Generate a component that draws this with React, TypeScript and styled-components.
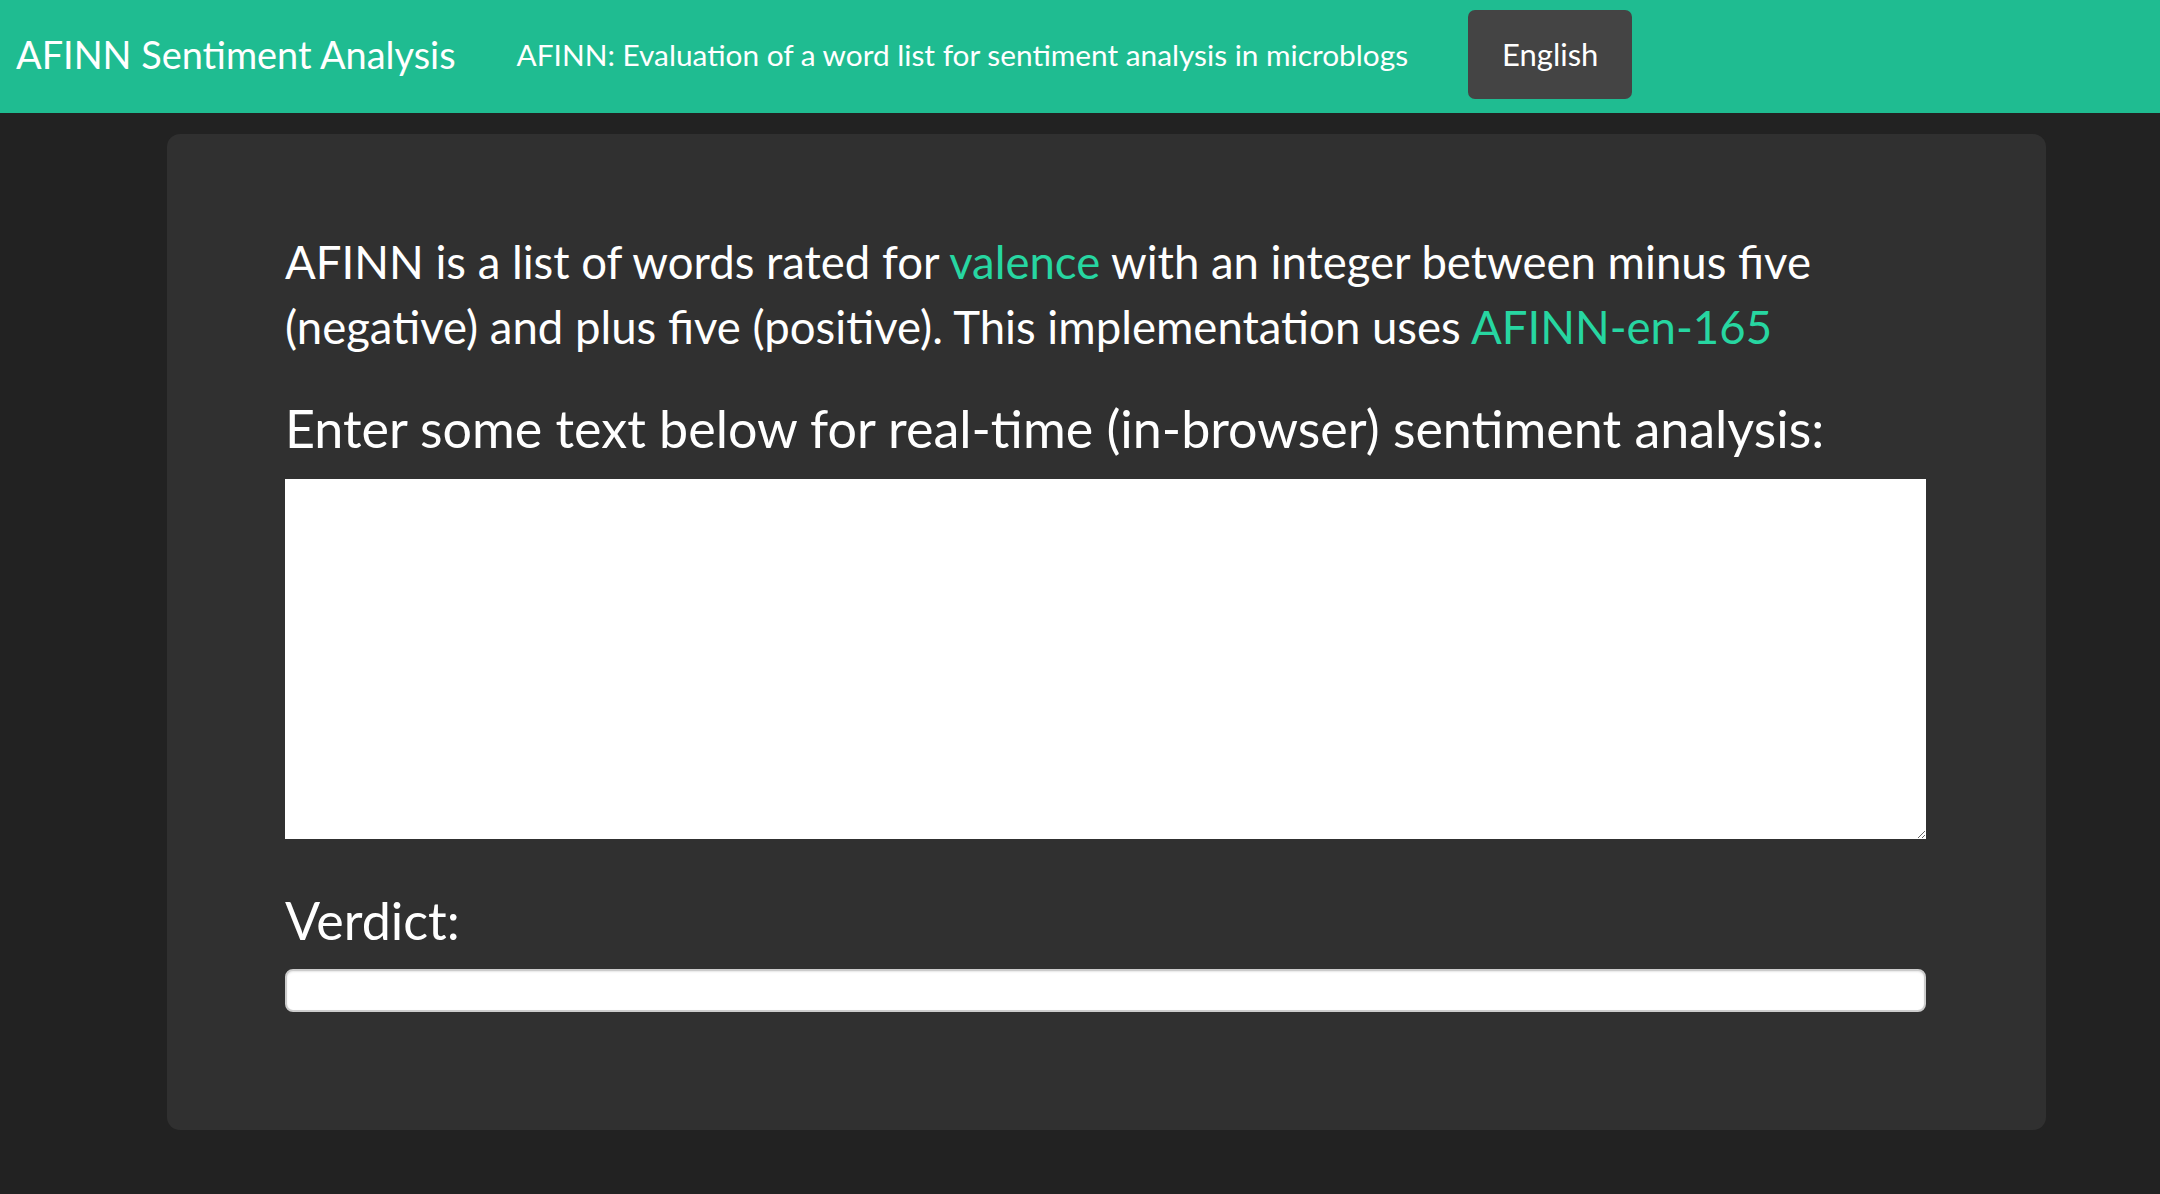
import React from 'react'
import styled, { createGlobalStyle } from 'styled-components'

const GlobalStyle = createGlobalStyle`
    * {
        box-sizing: border-box;
    }

    body {
        margin: 0;
        background: #222222;
        color: #ffffff;
        font-family: Lato, "Open Sans", sans-serif;
    }
`

const Navbar = styled.header`
    display: flex;
    align-items: center;
    height: 113px;
    padding: 0 16px 5px;
    background: #1fbc91;
`

const Brand = styled.div`
    font-size: 37.9px;
    margin-right: 61px;
    white-space: nowrap;
`

const NavText = styled.div`
    font-size: 29.8px;
    white-space: nowrap;
`

const LangButton = styled.button`
    height: 89px;
    margin-left: 60px;
    padding: 0 34px;
    border: none;
    border-radius: 7px;
    background: #444444;
    color: #ffffff;
    font-family: inherit;
    font-size: 31px;
`

const Main = styled.main`
    padding-top: 21px;
`

const Card = styled.section`
    width: 1879px;
    margin-left: 167px;
    padding: 96px 120px 118px 118px;
    border-radius: 13px;
    background: #303030;
`

const Intro = styled.p`
    margin: 0 0 38px;
    font-size: 45.5px;
    line-height: 64.5px;
`

const Link = styled.a`
    color: #27d6a1;
    text-decoration: none;
`

interface LabelProps {
    gap: number
}

const Label = styled.h2<LabelProps>`
    margin: 0 0 ${(props) => props.gap}px;
    font-size: 52px;
    font-weight: 400;
    line-height: 63.6px;
`

const TextBox = styled.textarea`
    display: block;
    width: 100%;
    height: 360px;
    margin-bottom: 50px;
    border: none;
    background: #ffffff;
    resize: vertical;
`

const VerdictBar = styled.div`
    height: 43px;
    border: 2px solid #cccccc;
    border-radius: 8px;
    background: #ffffff;
    box-shadow: inset 0 1px 2px rgba(0, 0, 0, 0.1);
`

const App: React.FC = () => {
    return (
        <>
            <GlobalStyle />
            <Navbar>
                <Brand>AFINN Sentiment Analysis</Brand>
                <NavText>AFINN: Evaluation of a word list for sentiment analysis in microblogs</NavText>
                <LangButton>English</LangButton>
            </Navbar>

            <Main>
                <Card>
                    <Intro>
                        AFINN is a list of words rated for <Link href="#">valence</Link> with an integer between minus five
                        (negative) and plus five (positive). This implementation uses <Link href="#">AFINN-en-165</Link>
                    </Intro>

                    <Label gap={18}>Enter some text below for real-time (in-browser) sentiment analysis:</Label>
                    <TextBox />

                    <Label gap={17}>Verdict:</Label>
                    <VerdictBar />
                </Card>
            </Main>
        </>
    )
}

export default App
